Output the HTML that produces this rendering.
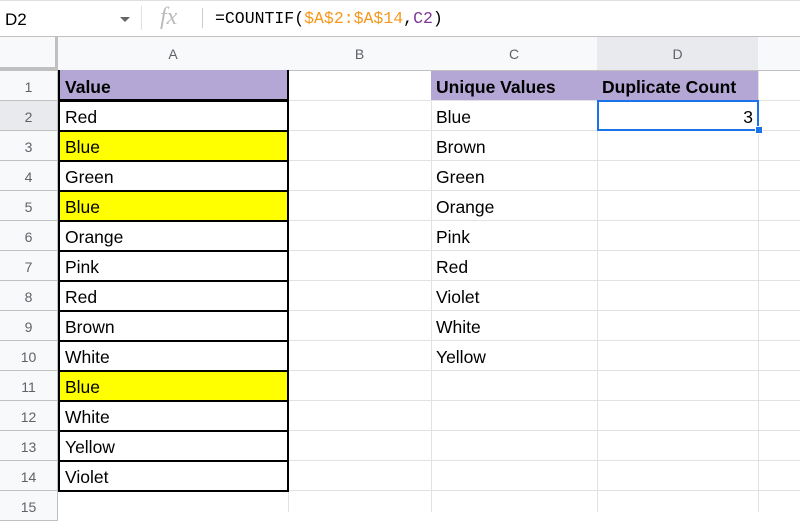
<!DOCTYPE html>
<html><head><style>
*{margin:0;padding:0;box-sizing:border-box}
body{width:800px;height:512px;overflow:hidden;background:#fff;font-family:"Liberation Sans",Arial,sans-serif;position:relative}
.a{position:absolute}
.fb{left:0;top:0;width:800px;height:37px;border-top:1px solid #e0e0e0;border-bottom:1px solid #c0c0c0;background:#fff}
.ch{top:37px;height:34px;background:#f8f9fa;border-right:1px solid #c0c0c0;border-bottom:1px solid #c0c0c0;color:#5f6368;font-size:14px;text-align:center;line-height:34px}
.rh{left:0;width:58px;height:30px;background:#f8f9fa;border-right:1px solid #c0c0c0;border-bottom:1px solid #c0c0c0;color:#5f6368;font-size:14px;text-align:center;line-height:33px}
.c{height:30px;border-right:1px solid #e2e2e2;border-bottom:1px solid #e2e2e2;font-size:17.5px;line-height:33px;padding-left:5px;color:#000;white-space:nowrap}
.A{left:58px;width:231px;border:2px solid #000;border-top:0;}
.h{background:#b4a7d6;font-weight:bold}
.y{background:#ffff00}
.A.r{height:32px;border-top:2px solid #000;line-height:31px}
</style></head><body>
<div class="a fb"></div>
<div class="a" style="left:5px;top:10px;font-size:17px;color:#000">D2</div>
<div class="a" style="left:120px;top:17px;width:0;height:0;border-left:5px solid transparent;border-right:5px solid transparent;border-top:5px solid #666"></div>
<div class="a" style="left:141px;top:6px;width:1px;height:24px;background:#e0e0e0"></div>
<div class="a" style="left:160px;top:4px;font-family:'Liberation Serif',serif;font-style:italic;font-size:24px;color:#bbb">fx</div>
<div class="a" style="left:202px;top:8px;width:1px;height:20px;background:#ccc"></div>
<div class="a" style="left:215px;top:9px;font-family:'Liberation Mono',monospace;font-size:16.5px;color:#000">=COUNTIF(<span style="color:#f7981d">$A$2:$A$14</span>,<span style="color:#7e3794">C2</span>)</div>

<div class="a ch" style="left:0;width:59px;border-right:4px solid #c0c0c0;border-bottom:4px solid #c0c0c0"></div>
<div class="a ch" style="left:58px;width:231px">A</div>
<div class="a ch" style="left:288px;width:144px">B</div>
<div class="a ch" style="left:431px;width:167px">C</div>
<div class="a ch" style="left:597px;width:162px;background:#e8eaed">D</div>
<div class="a ch" style="left:758px;width:50px"></div>

<div class="a rh" style="top:71px">1</div>
<div class="a rh" style="top:101px;background:#e8eaed">2</div>
<div class="a rh" style="top:131px">3</div>
<div class="a rh" style="top:161px">4</div>
<div class="a rh" style="top:191px">5</div>
<div class="a rh" style="top:221px">6</div>
<div class="a rh" style="top:251px">7</div>
<div class="a rh" style="top:281px">8</div>
<div class="a rh" style="top:311px">9</div>
<div class="a rh" style="top:341px">10</div>
<div class="a rh" style="top:371px">11</div>
<div class="a rh" style="top:401px">12</div>
<div class="a rh" style="top:431px">13</div>
<div class="a rh" style="top:461px">14</div>
<div class="a rh" style="top:491px">15</div>

<div class="a" style="left:58px;top:71px;width:742px;height:441px;background:
repeating-linear-gradient(to bottom,transparent 0,transparent 29px,#e2e2e2 29px,#e2e2e2 30px)"></div>
<div class="a" style="left:288px;top:71px;width:1px;height:441px;background:#e2e2e2"></div>
<div class="a" style="left:431px;top:71px;width:1px;height:441px;background:#e2e2e2"></div>
<div class="a" style="left:597px;top:71px;width:1px;height:441px;background:#e2e2e2"></div>
<div class="a" style="left:758px;top:71px;width:1px;height:441px;background:#e2e2e2"></div>

<div class="a c A h" style="top:70px;height:31px;border-top:0;line-height:34px">Value</div>
<div class="a c A r" style="top:100px">Red</div>
<div class="a c A r y" style="top:130px">Blue</div>
<div class="a c A r" style="top:160px">Green</div>
<div class="a c A r y" style="top:190px">Blue</div>
<div class="a c A r" style="top:220px">Orange</div>
<div class="a c A r" style="top:250px">Pink</div>
<div class="a c A r" style="top:280px">Red</div>
<div class="a c A r" style="top:310px">Brown</div>
<div class="a c A r" style="top:340px">White</div>
<div class="a c A r y" style="top:370px">Blue</div>
<div class="a c A r" style="top:400px">White</div>
<div class="a c A r" style="top:430px">Yellow</div>
<div class="a c A r" style="top:460px">Violet</div>

<div class="a c h" style="left:431px;top:71px;width:167px">Unique Values</div>
<div class="a c h" style="left:597px;top:71px;width:162px">Duplicate Count</div>
<div class="a c" style="left:431px;top:101px;width:167px">Blue</div>
<div class="a c" style="left:431px;top:131px;width:167px">Brown</div>
<div class="a c" style="left:431px;top:161px;width:167px">Green</div>
<div class="a c" style="left:431px;top:191px;width:167px">Orange</div>
<div class="a c" style="left:431px;top:221px;width:167px">Pink</div>
<div class="a c" style="left:431px;top:251px;width:167px">Red</div>
<div class="a c" style="left:431px;top:281px;width:167px">Violet</div>
<div class="a c" style="left:431px;top:311px;width:167px">White</div>
<div class="a c" style="left:431px;top:341px;width:167px">Yellow</div>

<div class="a" style="left:597px;top:100px;width:162px;height:31px;border:2px solid #1a73e8;font-size:17.5px;line-height:31px;text-align:right;padding-right:4px">3</div>
<div class="a" style="left:755px;top:126px;width:8px;height:8px;background:#1a73e8;border:1px solid #fff"></div>
</body></html>
